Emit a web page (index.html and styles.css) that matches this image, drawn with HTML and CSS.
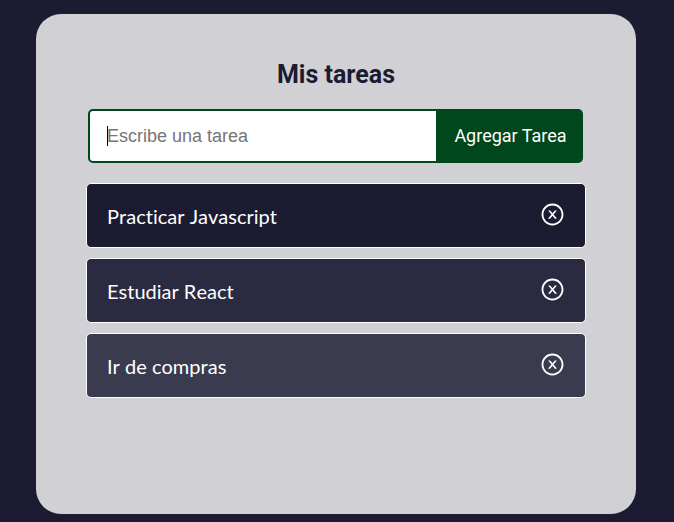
FILE: index.html
```html
<!DOCTYPE html>
<html lang="es">
<head>
    <meta charset="UTF-8">
    <meta name="viewport" content="width=device-width, initial-scale=1.0">
    <title>Mis tareas</title>
    <link rel="stylesheet" href="styles.css">
</head>
<body>
    <div class="app">
        <h1 class="title">Mis tareas</h1>
        <form class="task-form">
            <div class="input-wrap">
                <input class="task-input" type="text" placeholder="Escribe una tarea">
                <span class="caret"></span>
            </div>
            <button class="task-button" type="button">Agregar Tarea</button>
        </form>
        <div class="task-list">
            <div class="task task-1">
                <span class="task-text">Practicar Javascript</span>
                <svg class="task-icon" viewBox="0 0 1024 1024" width="25" height="25" fill="currentColor">
                    <path d="M685.4 354.8c0-4.4-3.6-8-8-8l-66 .3L512 465.6l-99.3-118.4-66.1-.3c-4.4 0-8 3.5-8 8 0 1.9.7 3.7 1.9 5.2l130.1 155L340.5 670a8.32 8.32 0 0 0-1.9 5.2c0 4.4 3.6 8 8 8l66.1-.3L512 564.4l99.3 118.4 66 .3c4.4 0 8-3.5 8-8 0-1.9-.7-3.7-1.9-5.2L553.5 515l130.1-155c1.2-1.4 1.8-3.3 1.8-5.2z"/>
                    <path d="M512 65C264.6 65 64 265.6 64 513s200.6 448 448 448 448-200.6 448-448S759.4 65 512 65zm0 820c-205.4 0-372-166.6-372-372s166.6-372 372-372 372 166.6 372 372-166.6 372-372 372z"/>
                </svg>
            </div>
            <div class="task task-2">
                <span class="task-text">Estudiar React</span>
                <svg class="task-icon" viewBox="0 0 1024 1024" width="25" height="25" fill="currentColor">
                    <path d="M685.4 354.8c0-4.4-3.6-8-8-8l-66 .3L512 465.6l-99.3-118.4-66.1-.3c-4.4 0-8 3.5-8 8 0 1.9.7 3.7 1.9 5.2l130.1 155L340.5 670a8.32 8.32 0 0 0-1.9 5.2c0 4.4 3.6 8 8 8l66.1-.3L512 564.4l99.3 118.4 66 .3c4.4 0 8-3.5 8-8 0-1.9-.7-3.7-1.9-5.2L553.5 515l130.1-155c1.2-1.4 1.8-3.3 1.8-5.2z"/>
                    <path d="M512 65C264.6 65 64 265.6 64 513s200.6 448 448 448 448-200.6 448-448S759.4 65 512 65zm0 820c-205.4 0-372-166.6-372-372s166.6-372 372-372 372 166.6 372 372-166.6 372-372 372z"/>
                </svg>
            </div>
            <div class="task task-3">
                <span class="task-text">Ir de compras</span>
                <svg class="task-icon" viewBox="0 0 1024 1024" width="25" height="25" fill="currentColor">
                    <path d="M685.4 354.8c0-4.4-3.6-8-8-8l-66 .3L512 465.6l-99.3-118.4-66.1-.3c-4.4 0-8 3.5-8 8 0 1.9.7 3.7 1.9 5.2l130.1 155L340.5 670a8.32 8.32 0 0 0-1.9 5.2c0 4.4 3.6 8 8 8l66.1-.3L512 564.4l99.3 118.4 66 .3c4.4 0 8-3.5 8-8 0-1.9-.7-3.7-1.9-5.2L553.5 515l130.1-155c1.2-1.4 1.8-3.3 1.8-5.2z"/>
                    <path d="M512 65C264.6 65 64 265.6 64 513s200.6 448 448 448 448-200.6 448-448S759.4 65 512 65zm0 820c-205.4 0-372-166.6-372-372s166.6-372 372-372 372 166.6 372 372-166.6 372-372 372z"/>
                </svg>
            </div>
        </div>
    </div>
</body>
</html>
```

FILE: styles.css
```css
body {
    margin: 0;
    height: 522px;
    overflow: hidden;
    background-color: #1b1b32;
    font-family: "Liberation Sans", Arial, sans-serif;
}
.app {
    box-sizing: border-box;
    width: 600px;
    height: 500px;
    margin: 14px 0 0 36px;
    padding: 46px 50px 0;
    border-radius: 25px;
    background-color: #d0d0d5;
}
.title {
    margin: 0 0 20px;
    font-family: Roboto, sans-serif;
    font-size: 25px;
    font-weight: 700;
    line-height: 29px;
    text-align: center;
    color: #1b1b32;
}
.task-form {
    display: flex;
    height: 54px;
    margin: 0 3px 20px 2px;
}
.input-wrap {
    position: relative;
    width: 350px;
}
.task-input {
    box-sizing: border-box;
    width: 100%;
    height: 54px;
    padding: 0 17px;
    border: 2px solid #00471b;
    border-radius: 5px 0 0 5px;
    outline: none;
    background-color: #fff;
    font-family: "Liberation Sans", Arial, sans-serif;
    font-size: 18px;
    color: #1b1b32;
}
.task-input::placeholder {
    color: #757575;
}
.caret {
    position: absolute;
    left: 19px;
    top: 17px;
    width: 1px;
    height: 20px;
    background-color: #000;
}
.task-button {
    flex: 1;
    padding: 0 0 2px;
    border: none;
    border-radius: 0 5px 5px 0;
    background-color: #00471b;
    font-family: Roboto, sans-serif;
    font-size: 18px;
    color: #fff;
}
.task-list {
    display: flex;
    flex-direction: column;
    gap: 10px;
}
.task {
    box-sizing: border-box;
    display: flex;
    align-items: center;
    justify-content: space-between;
    height: 65px;
    padding: 0 20px;
    border: 1px solid #fff;
    border-radius: 5px;
    font-family: Lato, sans-serif;
    font-size: 20px;
    font-kerning: none;
    font-variant-ligatures: none;
    color: #fff;
}
.task-1 {
    background-color: #1b1b32;
}
.task-2 {
    background-color: #2a2a40;
}
.task-3 {
    background-color: #3b3b4f;
}
.task-text {
    padding-top: 1px;
}
.task-icon {
    margin-top: -2px;
}
```
